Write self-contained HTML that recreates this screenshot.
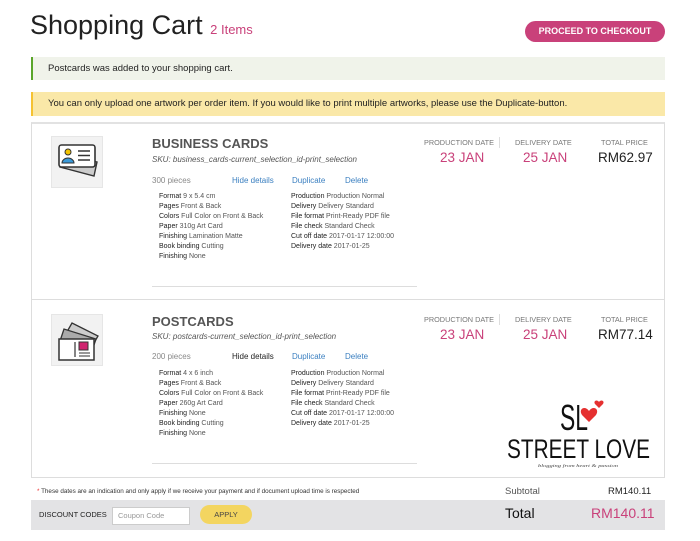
<!DOCTYPE html>
<html><head><meta charset="utf-8"><style>
*{margin:0;padding:0;box-sizing:border-box}
body{width:700px;height:541px;background:#fff;font-family:"Liberation Sans",sans-serif;color:#333;position:relative;overflow:hidden}
.a{position:absolute;white-space:nowrap}
.lab{font-size:7.3px;color:#777}
.val{font-size:13.5px;color:#c9417a}
.det{font-size:7px;line-height:10px;color:#555}
.det b{font-weight:normal;color:#222}
.lnk{font-size:8px;color:#3a7fc0}
</style></head><body>
<div class="a" style="left:30px;top:10px;font-size:27px;color:#222">Shopping Cart <span style="font-size:13px;color:#c9417a">2 Items</span></div>
<div class="a" style="left:525px;top:21px;width:140px;height:21px;border-radius:11px;background:#c9417a;color:#fff;font-size:9px;font-weight:bold;text-align:center;line-height:21px">PROCEED TO CHECKOUT</div>
<div class="a" style="left:31px;top:57px;width:634px;height:23px;background:#f0f3ea;border-left:2px solid #5aa52a;font-size:9.5px;line-height:23px;padding-left:15px;color:#222">Postcards was added to your shopping cart.</div>
<div class="a" style="left:31px;top:92px;width:634px;height:24px;background:#fae8a8;border-left:2px solid #f5c232;font-size:9.5px;line-height:24px;padding-left:15px;color:#222">You can only upload one artwork per order item. If you would like to print multiple artworks, please use the Duplicate-button.</div>
<div class="a" style="left:31px;top:122px;width:634px;height:356px;border:1px solid #ddd;border-top:2px solid #e2e2e2"></div>
<div class="a" style="left:31px;top:299px;width:634px;height:1px;background:#ddd"></div>

<!-- item 1 -->
<div class="a" style="left:51px;top:136px;width:52px;height:52px;background:#f2f2f2;border:1px solid #e6e6e6">
<svg width="50" height="50" viewBox="0 0 50 50" style="position:absolute;left:0;top:0"><path d="M8 30 L11 17 L45 25 L42 39 Z" fill="#ccc" stroke="#333" stroke-width="1.4"/><rect x="7" y="8" width="36" height="22" rx="2.5" fill="#fff" stroke="#333" stroke-width="1.6"/><circle cx="16" cy="15" r="3" fill="#f3c400" stroke="#333"/><path d="M10 26 a6 5 0 0 1 12 0 Z" fill="#3a9ad9" stroke="#333"/><path d="M26 14h12M26 18.5h12M26 23h12" stroke="#333" stroke-width="1.5"/></svg></div>
<div class="a" style="left:152px;top:136px;font-size:13px;font-weight:bold;color:#555">BUSINESS CARDS</div>
<div class="a" style="left:152px;top:155px;font-size:8px;font-style:italic;color:#555">SKU: business_cards-current_selection_id-print_selection</div>
<div class="a" style="left:152px;top:176px;font-size:8px;color:#888">300 pieces</div>
<div class="a lnk" style="left:232px;top:176px">Hide details</div>
<div class="a lnk" style="left:292px;top:176px">Duplicate</div>
<div class="a lnk" style="left:345px;top:176px">Delete</div>
<div class="a det" style="left:159px;top:192px"><b>Format</b> 9 x 5.4 cm<br><b>Pages</b> Front &amp; Back<br><b>Colors</b> Full Color on Front &amp; Back<br><b>Paper</b> 310g Art Card<br><b>Finishing</b> Lamination Matte<br><b>Book binding</b> Cutting<br><b>Finishing</b> None</div>
<div class="a det" style="left:291px;top:192px"><b>Production</b> Production Normal<br><b>Delivery</b> Delivery Standard<br><b>File format</b> Print-Ready PDF file<br><b>File check</b> Standard Check<br><b>Cut off date</b> 2017-01-17 12:00:00<br><b>Delivery date</b> 2017-01-25</div>
<div class="a" style="left:152px;top:286px;width:265px;height:1px;background:#ddd"></div>
<div class="a lab" style="left:424px;top:138px">PRODUCTION DATE</div>
<div class="a" style="left:499px;top:137px;width:1px;height:11px;background:#ddd"></div>
<div class="a lab" style="left:515px;top:138px">DELIVERY DATE</div>
<div class="a lab" style="left:601px;top:138px">TOTAL PRICE</div>
<div class="a val" style="left:440px;top:150px">23 JAN</div>
<div class="a val" style="left:523px;top:150px">25 JAN</div>
<div class="a" style="left:598px;top:150px;font-size:13.5px;color:#222">RM62.97</div>

<!-- item 2 -->
<div class="a" style="left:51px;top:314px;width:52px;height:52px;background:#f2f2f2;border:1px solid #e6e6e6">
<svg width="50" height="50" viewBox="0 0 50 50" style="position:absolute;left:0;top:0"><path d="M12 22 L20 8 L46 21 L39 33 Z" fill="#ccc" stroke="#333" stroke-width="1.3"/><path d="M8 26 L12 14 L44 24 L41 33 Z" fill="#aaa" stroke="#333" stroke-width="1.3"/><rect x="7" y="24" width="35" height="21" fill="#fff" stroke="#333" stroke-width="1.5"/><path d="M23 27v15" stroke="#333" stroke-width="1.2"/><rect x="27" y="27" width="9" height="8" fill="#d0246f" stroke="#333"/><path d="M27 38h11M27 41h11" stroke="#333" stroke-width=".9"/></svg></div>
<div class="a" style="left:152px;top:314px;font-size:13px;font-weight:bold;color:#555">POSTCARDS</div>
<div class="a" style="left:152px;top:332px;font-size:8px;font-style:italic;color:#555">SKU: postcards-current_selection_id-print_selection</div>
<div class="a" style="left:152px;top:352px;font-size:8px;color:#888">200 pieces</div>
<div class="a lnk" style="left:232px;top:352px;color:#222">Hide details</div>
<div class="a lnk" style="left:292px;top:352px">Duplicate</div>
<div class="a lnk" style="left:345px;top:352px">Delete</div>
<div class="a det" style="left:159px;top:369px"><b>Format</b> 4 x 6 inch<br><b>Pages</b> Front &amp; Back<br><b>Colors</b> Full Color on Front &amp; Back<br><b>Paper</b> 260g Art Card<br><b>Finishing</b> None<br><b>Book binding</b> Cutting<br><b>Finishing</b> None</div>
<div class="a det" style="left:291px;top:369px"><b>Production</b> Production Normal<br><b>Delivery</b> Delivery Standard<br><b>File format</b> Print-Ready PDF file<br><b>File check</b> Standard Check<br><b>Cut off date</b> 2017-01-17 12:00:00<br><b>Delivery date</b> 2017-01-25</div>
<div class="a" style="left:152px;top:463px;width:265px;height:1px;background:#ddd"></div>
<div class="a lab" style="left:424px;top:315px">PRODUCTION DATE</div>
<div class="a" style="left:499px;top:314px;width:1px;height:11px;background:#ddd"></div>
<div class="a lab" style="left:515px;top:315px">DELIVERY DATE</div>
<div class="a lab" style="left:601px;top:315px">TOTAL PRICE</div>
<div class="a val" style="left:440px;top:327px">23 JAN</div>
<div class="a val" style="left:523px;top:327px">25 JAN</div>
<div class="a" style="left:598px;top:327px;font-size:13.5px;color:#222">RM77.14</div>

<!-- logo -->
<svg class="a" style="left:500px;top:395px" width="160" height="75" viewBox="0 0 160 75">
<text x="60" y="35" font-family="Liberation Sans" font-size="36" fill="#111" transform="scale(1,1)" textLength="28" lengthAdjust="spacingAndGlyphs" font-weight="normal" style="font-weight:100">SL</text>
<path d="M89 16 c-4-6-11-2-7 4 l7 7 7-7 c4-6-3-10-7-4z" fill="#e53030"/>
<path d="M99 7 c-2-3-6-1-4 2 l4 4 4-4 c2-3-2-5-4-2z" fill="#e53030"/>
<text x="7" y="63" font-family="Liberation Sans" font-size="27" fill="#111" textLength="143" lengthAdjust="spacingAndGlyphs">STREET LOVE</text>
<text x="38" y="72" font-family="Liberation Serif" font-style="italic" font-size="4.5" fill="#444" textLength="80" lengthAdjust="spacingAndGlyphs">blogging from heart &amp; passion</text>
</svg>

<!-- bottom -->
<div class="a" style="left:37px;top:488px;font-size:6.3px;color:#333"><span style="color:#e33">*</span> These dates are an indication and only apply if we receive your payment and if document upload time is respected</div>
<div class="a" style="left:505px;top:486px;font-size:9.5px;color:#555">Subtotal</div>
<div class="a" style="left:608px;top:486px;font-size:9.5px;color:#222">RM140.11</div>
<div class="a" style="left:31px;top:500px;width:634px;height:30px;background:#e3e3e5"></div>
<div class="a" style="left:39px;top:510px;font-size:7.5px;color:#222">DISCOUNT CODES</div>
<div class="a" style="left:112px;top:507px;width:78px;height:18px;background:#fff;border:1px solid #ccc;font-size:7.5px;color:#999;line-height:16px;padding-left:5px">Coupon Code</div>
<div class="a" style="left:200px;top:505px;width:52px;height:19px;border-radius:10px;background:#f3d560;font-size:7.5px;color:#444;text-align:center;line-height:19px">APPLY</div>
<div class="a" style="left:505px;top:505px;font-size:14px;color:#111">Total</div>
<div class="a" style="left:591px;top:505px;font-size:14px;color:#c9417a">RM140.11</div>
</body></html>
